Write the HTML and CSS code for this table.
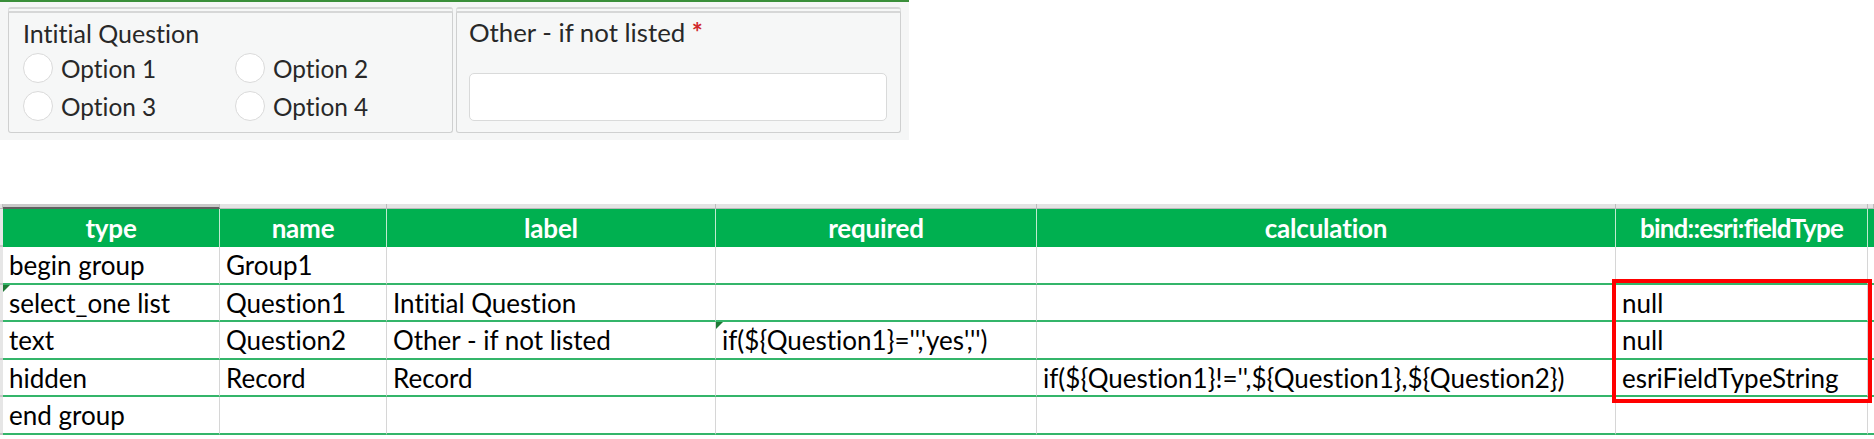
FILE: index.html
```html
<!DOCTYPE html>
<html>
<head>
<meta charset="utf-8">
<link rel="stylesheet" href="styles.css">
</head>
<body>
<div class="form">
  <div class="card q1">
    <div class="qlabel">Intitial Question</div>
    <div class="opts">
      <div class="opt"><span class="radio"></span><span>Option 1</span></div>
      <div class="opt"><span class="radio"></span><span>Option 2</span></div>
      <div class="opt"><span class="radio"></span><span>Option 3</span></div>
      <div class="opt"><span class="radio"></span><span>Option 4</span></div>
    </div>
  </div>
  <div class="card q2">
    <div class="qlabel big">Other - if not listed <span class="req">*</span></div>
    <div class="input"></div>
  </div>
</div>

<div class="sheet">
  <div class="colhdr">
    <div class="ch edge"></div>
    <div class="ch sel"></div>
    <div class="ch"></div>
    <div class="ch"></div>
    <div class="ch"></div>
    <div class="ch"></div>
    <div class="ch"></div>
    <div class="ch"></div>
  </div>
  <div class="grid">
    <div class="c rh"></div><div class="c h">type</div><div class="c h">name</div><div class="c h">label</div><div class="c h">required</div><div class="c h">calculation</div><div class="c h tight">bind::esri:fieldType</div><div class="c h last"></div>

    <div class="c rh"></div><div class="c">begin group</div><div class="c">Group1</div><div class="c"></div><div class="c"></div><div class="c"></div><div class="c"></div><div class="c last"></div>

    <div class="c rh"></div><div class="c flag">select_one list</div><div class="c">Question1</div><div class="c">Intitial Question</div><div class="c"></div><div class="c"></div><div class="c">null</div><div class="c last"></div>

    <div class="c rh"></div><div class="c">text</div><div class="c">Question2</div><div class="c">Other - if not listed</div><div class="c flag">if(${Question1}='','yes','')</div><div class="c"></div><div class="c">null</div><div class="c last"></div>

    <div class="c rh"></div><div class="c">hidden</div><div class="c">Record</div><div class="c">Record</div><div class="c"></div><div class="c">if(${Question1}!='',${Question1},${Question2})</div><div class="c">esriFieldTypeString</div><div class="c last"></div>

    <div class="c rh"></div><div class="c">end group</div><div class="c"></div><div class="c"></div><div class="c"></div><div class="c"></div><div class="c"></div><div class="c last"></div>
  </div>
  <div class="redbox"></div>
</div>
</body>
</html>
```

FILE: styles.css
```css
* { box-sizing: border-box; }
html, body { margin: 0; padding: 0; background: #ffffff; }
body {
  width: 1874px;
  height: 439px;
  overflow: hidden;
  font-variant-ligatures: none;
}

/* ---------- form preview ---------- */
.form {
  width: 909px;
  height: 140px;
  background: #f5f6f6;
  border-top: 2px solid #3a8f3a;
  display: flex;
  padding: 5px 0 0 8px;
  font-family: "Lato", "Noto Sans", sans-serif;
  color: #282828;
}
.card {
  border: 1px solid #cfd0d0;
  border-top: 6px double #d6d7d7;
  border-radius: 3px;
  background: #f6f7f7;
  height: 126px;
}
.q1 { width: 445px; padding: 6px 0 0 14px; }
.q2 { width: 445px; margin-left: 3px; padding: 5px 13px 0 12px; }
.qlabel { font-size: 25px; line-height: 29px; }
.qlabel.big { font-size: 25.8px; }
.req { color: #d0282c; font-size: 26px; font-weight: bold; }
.opts {
  display: grid;
  grid-template-columns: 212px 200px;
  grid-auto-rows: 38px;
  margin-top: 1px;
}
.opt {
  display: flex;
  align-items: center;
  gap: 8px;
  font-size: 24.4px;
}
.radio {
  width: 30px;
  height: 30px;
  border-radius: 50%;
  background: #ffffff;
  border: 1px solid #dadada;
  flex: none;
}
.input {
  margin-top: 26px;
  height: 48px;
  background: #ffffff;
  border: 1px solid #d9dada;
  border-radius: 5px;
}

/* ---------- spreadsheet ---------- */
.sheet {
  position: relative;
  margin-top: 64px;
  font-family: "Lato", "Liberation Sans", sans-serif;
  font-size: 26px;
  color: #000;
}
.colhdr {
  display: grid;
  grid-template-columns: 3px 217px 167px 329px 321px 579px 252px 6px;
  height: 5px;
}
.ch {
  background: #e3e3e3;
  border-bottom: 1px solid #b9b9b9;
  border-right: 1px solid #bdbdbd;
}
.ch.sel { background: #c9c9c9; border-bottom: 2px solid #5f5f5f; }
.ch.edge { background: #e3e3e3; }
.grid {
  display: grid;
  grid-template-columns: 3px 217px 167px 329px 321px 579px 252px 6px;
  grid-template-rows: 38px repeat(5, 37.6px);
}
.c {
  border-right: 1px solid #d6d6d6;
  border-bottom: 2px solid #34b56a;
  padding: 2px 0 0 6px;
  line-height: 33px;
  white-space: nowrap;
  overflow: visible;
  position: relative;
}
.c.h {
  background: #00b050;
  color: #ffffff;
  font-weight: bold;
  text-align: center;
  padding: 0;
  border-bottom: none;
  border-right: 1px solid #bfe9cf;
  line-height: 38px;
  letter-spacing: -0.2px;
}
.c.h.tight { letter-spacing: -0.8px; }
.c.h.last { border-right: none; }
.c.rh {
  background: #e6e6e6;
  border-right: none;
  border-bottom: 2px solid #c4c4c4;
  padding: 0;
}
.c.last { border-right: none; padding: 0; }
.flag::before {
  content: "";
  position: absolute;
  left: 0;
  top: 0;
  border-top: 7px solid #1f7a36;
  border-right: 7px solid transparent;
}
.redbox {
  position: absolute;
  left: 1612px;
  top: 75px;
  width: 260px;
  height: 124px;
  border: 4px solid #ff0000;
}
```
